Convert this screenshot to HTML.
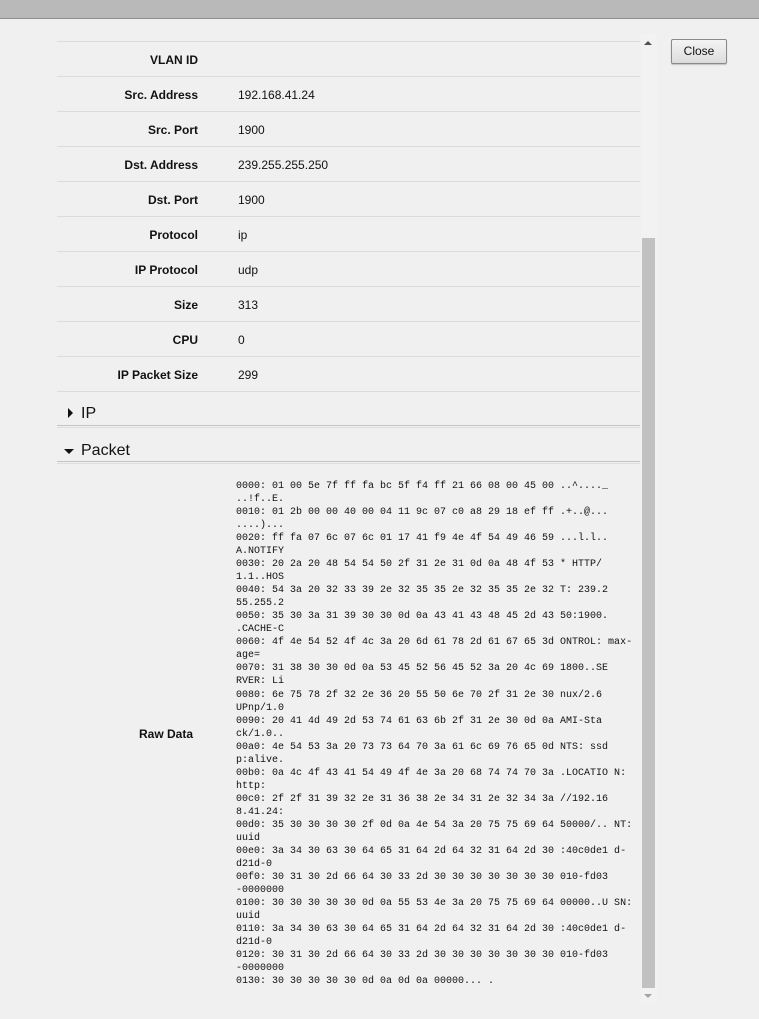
<!DOCTYPE html>
<html><head><meta charset="utf-8"><style>
html,body{margin:0;padding:0;background:#f0f0f0;width:759px;height:1019px;overflow:hidden;font-family:"Liberation Sans",sans-serif;color:#111}
.top{position:absolute;left:0;top:0;width:759px;height:18px;background:#b9b9b9;border-bottom:1px solid #8e8e8e}
.row{position:absolute;left:57px;width:583px;height:34px;border-top:1px solid #dcdcdc}
.row .l{position:absolute;right:442px;top:11px;font-weight:bold;font-size:12px;white-space:nowrap}
.row .v{position:absolute;left:181px;top:11px;font-size:12px}
.hline{position:absolute;left:57px;width:583px;height:1px}
.sec{position:absolute;left:81px;font-size:16px;color:#111}
.tri{position:absolute;width:0;height:0}
.hex{position:absolute;left:236px;top:480px;font-family:"Liberation Mono",monospace;font-size:10px;line-height:13.03px;white-space:pre;color:#111}
.btn{position:absolute;left:671px;top:39px;width:54px;height:23px;border:1px solid #8a8a8a;border-radius:2px;background:linear-gradient(#f4f4f4,#dcdcdc);font-size:12px;text-align:center;line-height:23px;box-shadow:0 1px 1px rgba(0,0,0,.2)}
</style></head><body>
<div class="top"></div>
<div class="btn">Close</div>
<div style="position:absolute;left:641px;top:34px;width:16px;height:970px;background:#f2f2f2"></div>
<div style="position:absolute;left:642px;top:238px;width:13px;height:750px;background:#c1c1c1"></div>
<div class="tri" style="left:644px;top:41px;border-left:4px solid transparent;border-right:4px solid transparent;border-bottom:4px solid #505050"></div>
<div class="tri" style="left:644px;top:994px;border-left:4px solid transparent;border-right:4px solid transparent;border-top:4px solid #a3a3a3"></div>

<div class="row" style="top:41px"><span class="l">VLAN ID</span></div>
<div class="row" style="top:76px"><span class="l">Src. Address</span><span class="v">192.168.41.24</span></div>
<div class="row" style="top:111px"><span class="l">Src. Port</span><span class="v">1900</span></div>
<div class="row" style="top:146px"><span class="l">Dst. Address</span><span class="v">239.255.255.250</span></div>
<div class="row" style="top:181px"><span class="l">Dst. Port</span><span class="v">1900</span></div>
<div class="row" style="top:216px"><span class="l">Protocol</span><span class="v">ip</span></div>
<div class="row" style="top:251px"><span class="l">IP Protocol</span><span class="v">udp</span></div>
<div class="row" style="top:286px"><span class="l">Size</span><span class="v">313</span></div>
<div class="row" style="top:321px"><span class="l">CPU</span><span class="v">0</span></div>
<div class="row" style="top:356px"><span class="l">IP Packet Size</span><span class="v">299</span></div>
<div class="hline" style="top:391px;background:#dcdcdc"></div>

<div class="tri" style="left:68px;top:408px;border-top:5px solid transparent;border-bottom:5px solid transparent;border-left:5px solid #111"></div>
<div class="sec" style="top:405px">IP</div>
<div class="hline" style="top:425px;background:#c4c4c4"></div>
<div class="hline" style="top:427px;background:#dedede"></div>

<div class="tri" style="left:64px;top:449px;border-left:5px solid transparent;border-right:5px solid transparent;border-top:5px solid #111"></div>
<div class="sec" style="top:442px">Packet</div>
<div class="hline" style="top:461px;background:#c4c4c4"></div>
<div class="hline" style="top:463px;background:#dedede"></div>

<div style="position:absolute;left:139px;top:727px;font-weight:bold;font-size:12px">Raw Data</div>
<div class="hex">0000: 01 00 5e 7f ff fa bc 5f f4 ff 21 66 08 00 45 00 ..^...._
..!f..E.
0010: 01 2b 00 00 40 00 04 11 9c 07 c0 a8 29 18 ef ff .+..@...
....)...
0020: ff fa 07 6c 07 6c 01 17 41 f9 4e 4f 54 49 46 59 ...l.l..
A.NOTIFY
0030: 20 2a 20 48 54 54 50 2f 31 2e 31 0d 0a 48 4f 53 * HTTP/
1.1..HOS
0040: 54 3a 20 32 33 39 2e 32 35 35 2e 32 35 35 2e 32 T: 239.2
55.255.2
0050: 35 30 3a 31 39 30 30 0d 0a 43 41 43 48 45 2d 43 50:1900.
.CACHE-C
0060: 4f 4e 54 52 4f 4c 3a 20 6d 61 78 2d 61 67 65 3d ONTROL: max-
age=
0070: 31 38 30 30 0d 0a 53 45 52 56 45 52 3a 20 4c 69 1800..SE
RVER: Li
0080: 6e 75 78 2f 32 2e 36 20 55 50 6e 70 2f 31 2e 30 nux/2.6
UPnp/1.0
0090: 20 41 4d 49 2d 53 74 61 63 6b 2f 31 2e 30 0d 0a AMI-Sta
ck/1.0..
00a0: 4e 54 53 3a 20 73 73 64 70 3a 61 6c 69 76 65 0d NTS: ssd
p:alive.
00b0: 0a 4c 4f 43 41 54 49 4f 4e 3a 20 68 74 74 70 3a .LOCATIO N:
http:
00c0: 2f 2f 31 39 32 2e 31 36 38 2e 34 31 2e 32 34 3a //192.16
8.41.24:
00d0: 35 30 30 30 30 2f 0d 0a 4e 54 3a 20 75 75 69 64 50000/.. NT:
uuid
00e0: 3a 34 30 63 30 64 65 31 64 2d 64 32 31 64 2d 30 :40c0de1 d-
d21d-0
00f0: 30 31 30 2d 66 64 30 33 2d 30 30 30 30 30 30 30 010-fd03
-0000000
0100: 30 30 30 30 30 0d 0a 55 53 4e 3a 20 75 75 69 64 00000..U SN:
uuid
0110: 3a 34 30 63 30 64 65 31 64 2d 64 32 31 64 2d 30 :40c0de1 d-
d21d-0
0120: 30 31 30 2d 66 64 30 33 2d 30 30 30 30 30 30 30 010-fd03
-0000000
0130: 30 30 30 30 30 0d 0a 0d 0a 00000... .</div>
</body></html>
